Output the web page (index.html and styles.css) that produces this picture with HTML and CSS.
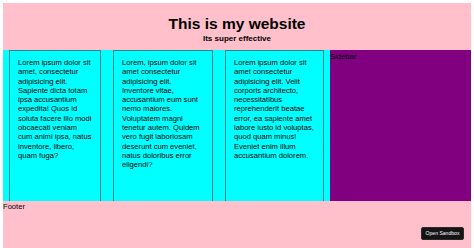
FILE: index.html
```
<html>
  <head>
    <link rel="stylesheet" href="styles.css">
  </head>
  <body>
    <div class='header'>
      <h1>This is my website</h1>
      <h2>Its super effective</h2>
    </div>
    <div class='main'>
      <div class='card'>
        Lorem ipsum dolor sit amet, consectetur adipisicing elit. Sapiente dicta totam
        ipsa accusantium expedita! Quos id soluta facere illo modi obcaecati veniam
        cum animi ipsa, natus inventore, libero, quam fuga?
      </div>
      <div class='card'>
        Lorem, ipsum dolor sit amet consectetur adipisicing elit. Inventore vitae,
        accusantium eum sunt nemo maiores. Voluptatem magni tenetur autem. Quidem
        vero fugit laboriosam deserunt cum eveniet, natus doloribus error eligendi?
      </div>
      <div class='card narrow'>
        Lorem ipsum dolor sit amet consectetur adipisicing elit. Velit corporis
        architecto, necessitatibus reprehenderit beatae error, ea sapiente amet
        labore iusto id voluptas, quod quam minus! Eveniet enim illum accusantium dolorem.
      </div>
      <div class='sidebar'>Sidebar</div>
    </div>
    <div class='footer'>Footer</div>
    <a class='sandbox-btn'>Open Sandbox</a>
  </body>
</html>
```

FILE: styles.css
```
body {
  margin: 3px;
  font-family: "Liberation Sans", Arial, sans-serif;
  font-size: 7.6px;
  line-height: 9.3px;
  color: #000;
}

.header {
  background: pink;
  height: 47px;
  box-sizing: border-box;
  padding-top: 12.2px;
  text-align: center;
}
.header h1 {
  margin: 0;
  font-size: 15.5px;
  line-height: 18px;
}
.header h2 {
  margin: 1px 0 0 0;
  font-size: 8px;
  line-height: 9px;
}

.main {
  display: flex;
  flex-direction: row;
  height: 151px;
  background: cyan;
}
.card {
  width: 92px;
  flex: none;
  box-sizing: border-box;
  margin: 0 6px;
  padding: 7px 8px;
  border: 1px solid #2f8384;
  border-bottom: 0;
}
.card + .card {
  width: 100px;
}
.card.narrow {
  width: 99px;
}
.sidebar {
  flex: 1;
  background: purple;
  padding-top: 2.5px;
  line-height: 8.7px;
}

.footer {
  background: pink;
  height: 50px;
  line-height: 9px;
  padding-top: 0.5px;
}

.sandbox-btn {
  position: fixed;
  right: 10px;
  bottom: 8px;
  width: 43px;
  height: 13px;
  box-sizing: border-box;
  background: #151515;
  border: 1px solid #2a2a2a;
  border-radius: 2px;
  color: #fff;
  font-size: 5.1px;
  line-height: 11px;
  text-align: center;
}
```
